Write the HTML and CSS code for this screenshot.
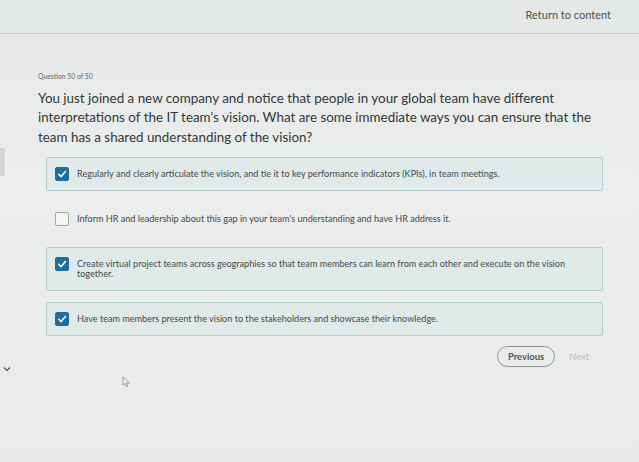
FILE: index.html
```html
<!DOCTYPE html>
<html>
<head>
<meta charset="utf-8">
<link rel="stylesheet" href="styles.css">
</head>
<body>
<header class="topbar">
  <a class="return-link">Return to content</a>
</header>
<div class="edge-tab"></div>
<main class="quiz">
  <div class="q-count">Question 50 of 50</div>
  <p class="q-text">You just joined a new company and notice that people in your global team have different interpretations of the IT team's vision. What are some immediate ways you can ensure that the team has a shared understanding of the vision?</p>
  <div class="options">
    <label class="option selected">
      <span class="box checked"><svg viewBox="0 0 14 14"><path d="M3.2 7.3 L6 10 L11 4" fill="none" stroke="#fff" stroke-width="1.8" stroke-linecap="round" stroke-linejoin="round"/></svg></span>
      <span class="opt-text">Regularly and clearly articulate the vision, and tie it to key performance indicators (KPIs), in team meetings.</span>
    </label>
    <label class="option">
      <span class="box"></span>
      <span class="opt-text">Inform HR and leadership about this gap in your team's understanding and have HR address it.</span>
    </label>
    <label class="option selected tall">
      <span class="box checked"><svg viewBox="0 0 14 14"><path d="M3.2 7.3 L6 10 L11 4" fill="none" stroke="#fff" stroke-width="1.8" stroke-linecap="round" stroke-linejoin="round"/></svg></span>
      <span class="opt-text">Create virtual project teams across geographies so that team members can learn from each other and execute on the vision together.</span>
    </label>
    <label class="option selected">
      <span class="box checked"><svg viewBox="0 0 14 14"><path d="M3.2 7.3 L6 10 L11 4" fill="none" stroke="#fff" stroke-width="1.8" stroke-linecap="round" stroke-linejoin="round"/></svg></span>
      <span class="opt-text">Have team members present the vision to the stakeholders and showcase their knowledge.</span>
    </label>
  </div>
  <nav class="pager">
    <button class="btn-prev">Previous</button>
    <button class="btn-next">Next</button>
  </nav>
</main>
<svg class="chevron" viewBox="0 0 8 6"><path d="M1 1.5 L4 4.5 L7 1.5" fill="none" stroke="#555" stroke-width="1.2"/></svg>
<svg class="cursor" viewBox="0 0 10 14"><path d="M1 1 L1 11 L3.5 8.7 L5.3 12.5 L6.8 11.8 L5 8.2 L8.3 8.2 Z" fill="#f4f4f4" stroke="#777" stroke-width="0.8"/></svg>
</body>
</html>
```

FILE: styles.css
```css
* { box-sizing: border-box; }
html, body { margin: 0; padding: 0; }
body {
  width: 639px;
  height: 462px;
  overflow: hidden;
  font-family: "Lato", "Open Sans", sans-serif;
  color: #3f4444;
  background: linear-gradient(180deg, #e6e9e8 0%, #ebeeec 40%, #e8ebe9 100%);
  position: relative;
}
.topbar {
  height: 34px;
  border-bottom: 1px solid #c9cecd;
  display: flex;
  justify-content: flex-end;
  align-items: flex-start;
  padding: 8px 28px 0 0;
  background: #e4e8e6;
}
.return-link {
  font-size: 11px;
  color: #4d5252;
}
.edge-tab {
  position: absolute;
  left: 0;
  top: 148px;
  width: 5px;
  height: 28px;
  background: #d3d6d4;
}
.quiz {
  padding: 38px 0 0 38px;
}
.q-count {
  font-size: 6.8px;
  color: #5f6565;
  line-height: 9px;
}
.q-text {
  margin: 8px 0 0 0;
  width: 570px;
  font-size: 13.4px;
  line-height: 19.3px;
  color: #333838;
}
.options {
  margin: 10px 0 0 8px;
  width: 557px;
  display: flex;
  flex-direction: column;
  gap: 11px;
}
.option {
  display: flex;
  align-items: center;
  min-height: 34px;
  padding: 4px 32px 4px 8px;
  border: 1px solid transparent;
  border-radius: 2px;
}
.option.selected {
  background: #e0ebe9;
  border-color: #b6cbcc;
}
.option.tall {
  min-height: 44px;
  align-items: flex-start;
  padding-top: 9px;
}
.box {
  flex: none;
  width: 14px;
  height: 14px;
  border: 1px solid #9ea5a5;
  background: #f4f6f5;
  border-radius: 2px;
  margin-right: 8px;
  display: flex;
}
.box.checked {
  background: #1f6f9e;
  border-color: #1f6f9e;
}
.box svg { width: 12px; height: 12px; }
.opt-text {
  font-size: 9.1px;
  line-height: 10px;
  color: #444a4a;
}
.tall .opt-text { margin-top: 2px; }
.pager {
  display: flex;
  justify-content: flex-end;
  align-items: center;
  gap: 14px;
  margin-top: 10px;
  width: 557px;
}
.btn-prev {
  font-family: inherit;
  width: 58px;
  height: 21px;
  border: 1px solid #8c9292;
  border-radius: 11px;
  background: transparent;
  font-size: 9.4px;
  font-weight: 700;
  color: #505656;
  padding: 0;
}
.btn-next {
  font-family: inherit;
  background: transparent;
  border: none;
  font-size: 9.4px;
  color: #b9bebd;
  padding: 0;
  margin-right: 6px;
}
.chevron {
  position: absolute;
  left: 3px;
  top: 366px;
  width: 8px;
  height: 6px;
}
.cursor {
  position: absolute;
  left: 122px;
  top: 376px;
  width: 9px;
  height: 12px;
}
```
